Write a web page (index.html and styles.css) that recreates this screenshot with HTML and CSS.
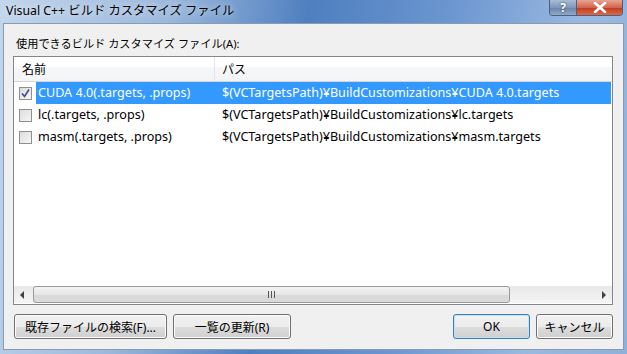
FILE: index.html
```html
<!doctype html>
<html>
  <head>
    <title>Visual C++ ビルド カスタマイズ ファイル</title>
    <link rel="stylesheet" href="styles.css">
  </head>
  <body>
    <div class="window">
      <div class="titlebar">
        <span class="title">Visual C++ ビルド カスタマイズ ファイル</span>
        <div class="caption-buttons">
          <div class="cap-btn help">?</div>
          <div class="cap-btn close">
            <svg width="14" height="11" viewBox="0 0 14 11">
              <path d="M2 1 L12 10 M12 1 L2 10" stroke="#ffffff" stroke-width="2.6" stroke-linecap="round"/>
            </svg>
          </div>
        </div>
      </div>
      <div class="client">
        <div class="label">使用できるビルド カスタマイズ ファイル(A):</div>
        <div class="listbox">
          <div class="list-header">
            <div class="col-name">名前</div>
            <div class="col-path">パス</div>
          </div>
          <div class="rows">
            <div class="row selected">
              <span class="check checked">
                <svg width="11" height="11" viewBox="0 0 11 11">
                  <path d="M2 5.5 L4.5 8.5 L9 1.5" stroke="#3b4a8c" stroke-width="1.6" fill="none"/>
                </svg>
              </span>
              <span class="name">CUDA 4.0(.targets, .props)</span>
              <span class="path">$(VCTargetsPath)¥BuildCustomizations¥CUDA 4.0.targets</span>
            </div>
            <div class="row">
              <span class="check"></span>
              <span class="name">lc(.targets, .props)</span>
              <span class="path">$(VCTargetsPath)¥BuildCustomizations¥lc.targets</span>
            </div>
            <div class="row">
              <span class="check"></span>
              <span class="name">masm(.targets, .props)</span>
              <span class="path">$(VCTargetsPath)¥BuildCustomizations¥masm.targets</span>
            </div>
          </div>
          <div class="hscroll">
            <div class="arrow">
              <svg width="5" height="8" viewBox="0 0 5 8"><path d="M4 0 L0 4 L4 8 Z" fill="#404040"/></svg>
            </div>
            <div class="track">
              <div class="thumb">
                <svg width="7" height="7" viewBox="0 0 7 7">
                  <path d="M0.5 0 V7 M3.5 0 V7 M6.5 0 V7" stroke="#555555" stroke-width="1"/>
                </svg>
              </div>
            </div>
            <div class="arrow">
              <svg width="5" height="8" viewBox="0 0 5 8"><path d="M1 0 L5 4 L1 8 Z" fill="#404040"/></svg>
            </div>
          </div>
        </div>
        <div class="buttons">
          <button class="btn btn-find">既存ファイルの検索(F)...</button>
          <button class="btn btn-refresh">一覧の更新(R)</button>
          <div class="spacer"></div>
          <button class="btn btn-ok">OK</button>
          <button class="btn btn-cancel">キャンセル</button>
        </div>
      </div>
    </div>
  </body>
</html>
```

FILE: styles.css
```css
html, body {
  margin: 0;
  height: 100%;
}
body {
  font-family: "Noto Sans", "Noto Sans CJK JP", sans-serif;
  font-size: 12px;
  color: #000000;
  background: linear-gradient(100deg, #c3d6ec 0%, #9bb8dc 25%, #4f7fc0 45%, #6a95cf 65%, #9ab9e0 85%, #8fb0da 100%);
}
.window {
  height: 354px;
  display: flex;
  flex-direction: column;
}
.titlebar {
  height: 23px;
  display: flex;
  justify-content: space-between;
  align-items: flex-start;
}
.title {
  padding-left: 6px;
  padding-top: 2px;
  font-size: 12.3px;
  line-height: 17px;
  text-shadow: 0 0 6px rgba(255, 255, 255, 0.9);
}
.caption-buttons {
  display: flex;
  margin-right: 4px;
  border: 1px solid #4d5f7a;
  border-top: none;
  border-radius: 0 0 4px 4px;
  overflow: hidden;
}
.cap-btn {
  height: 15px;
  display: flex;
  align-items: center;
  justify-content: center;
  color: #ffffff;
  font-weight: bold;
  font-size: 12px;
}
.help {
  width: 26px;
  background: linear-gradient(#a8bcd6, #7f98ba 50%, #6883a8 51%, #8fa9c9);
  border-right: 1px solid #4d5f7a;
  text-shadow: 0 0 2px #333;
}
.close {
  width: 45px;
  background: linear-gradient(#e8a493, #d2664f 50%, #c3391c 51%, #d56b4c);
}
.client {
  flex: 1;
  margin: 0 3px 4px 3px;
  background: #f0f0f0;
  border: 1px solid #8a9ab0;
  display: flex;
  flex-direction: column;
  padding: 0 10px 0 9px;
}
.label {
  margin: 11px 0 0 3px;
  line-height: 18px;
  font-size: 11.2px;
}
.listbox {
  margin-top: 3px;
  height: 247px;
  border: 1px solid #828790;
  background: #ffffff;
  display: flex;
  flex-direction: column;
}
.list-header {
  height: 24px;
  display: flex;
  background: linear-gradient(#ffffff 0%, #ffffff 40%, #f6f7f8 41%, #f3f4f6 100%);
  border-bottom: 1px solid #d5d5d5;
  line-height: 25px;
}
.col-name {
  width: 192px;
  padding-left: 8px;
  border-right: 1px solid #e3e5e8;
}
.col-path {
  padding-left: 7px;
}
.rows {
  flex: 1;
}
.row {
  height: 22px;
  display: flex;
  align-items: center;
  padding-right: 1px;
  font-size: 12.6px;
}
.check {
  width: 11px;
  height: 11px;
  margin: 0 4px 0 5px;
  border: 1px solid #8e8f8f;
  background: linear-gradient(135deg, #dcdcdc, #f6f6f6);
  display: flex;
  align-items: center;
  justify-content: center;
}
.name {
  width: 177px;
  padding-left: 2px;
  height: 22px;
  line-height: 22px;
}
.path {
  flex: 1;
  padding-left: 7px;
  height: 22px;
  line-height: 22px;
}
.row.selected .name,
.row.selected .path {
  background: #3399ff;
  color: #ffffff;
}
.hscroll {
  height: 17px;
  display: flex;
  background: linear-gradient(#e8e8e8, #f4f4f4);
  margin-bottom: 1px;
}
.arrow {
  width: 17px;
  display: flex;
  align-items: center;
  justify-content: center;
}
.track {
  flex: 1;
  padding: 0 85px 0 2px;
  display: flex;
}
.thumb {
  flex: 1;
  border: 1px solid #9a9a9a;
  border-radius: 3px;
  background: linear-gradient(#f3f3f3, #e6e6e6 50%, #d9d9d9 51%, #dadada);
  display: flex;
  align-items: center;
  justify-content: center;
}
.buttons {
  display: flex;
  margin-top: 9px;
  gap: 6px;
}
.spacer {
  flex: 1;
}
.btn {
  height: 25px;
  font-family: inherit;
  font-size: 12px;
  border: 1px solid #707070;
  border-radius: 3px;
  background: linear-gradient(#f2f2f2, #ebebeb 50%, #dddddd 51%, #cfcfcf);
  box-shadow: inset 0 0 0 1px #fcfcfc;
  padding: 0;
}
.btn-find {
  width: 153px;
  margin-left: 1px;
}
.btn-refresh {
  width: 118px;
}
.btn-ok {
  width: 77px;
  border-color: #3c7fb1;
  box-shadow: inset 0 0 0 1px #bfe3f7;
}
.btn-cancel {
  width: 77px;
}
```
